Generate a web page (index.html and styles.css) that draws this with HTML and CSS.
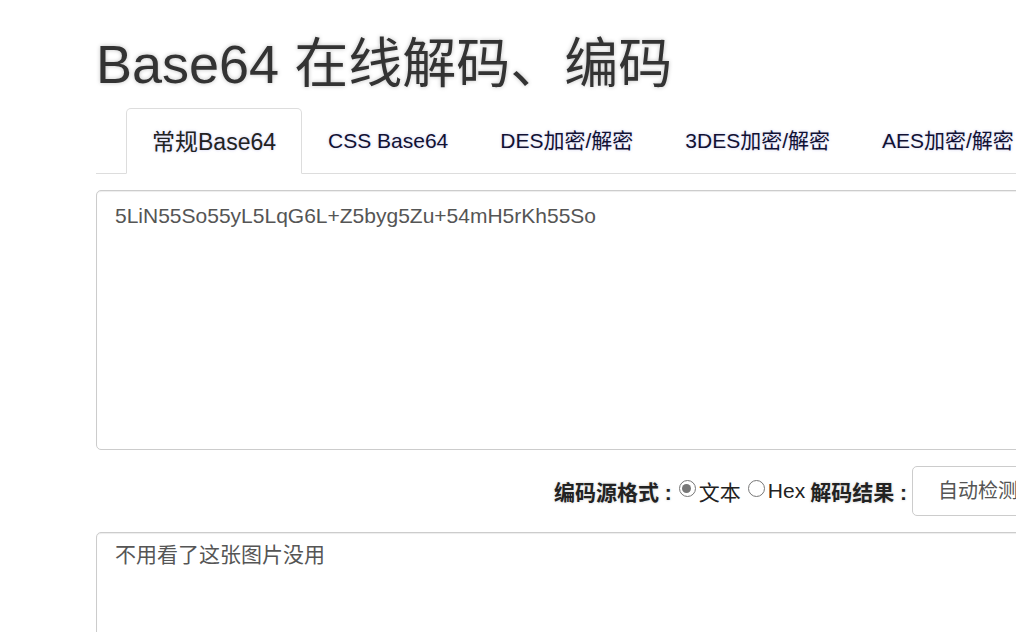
FILE: index.html
```html
<!DOCTYPE html>
<html lang="zh-CN">
<head>
    <meta charset="UTF-8">
    <title>Base64 在线解码、编码</title>
    <link rel="stylesheet" href="styles.css">
</head>
<body>
    <div class="container">
        <h1 class="page-title">Base64 在线解码、编码</h1>

        <ul class="nav-tabs">
            <li class="active"><a href="#">常规Base64</a></li>
            <li><a href="#">CSS Base64</a></li>
            <li><a href="#">DES加密/解密</a></li>
            <li><a href="#">3DES加密/解密</a></li>
            <li><a href="#">AES加密/解密</a></li>
        </ul>

        <textarea class="form-control source">5LiN55So55yL5LqG6L+Z5byg5Zu+54mH5rKh55So</textarea>

        <div class="options">
            <b>编码源格式 :</b>
            <label class="radio"><span class="dot checked"></span>文本</label>
            <label class="radio"><span class="dot"></span>Hex</label>
            <b class="result-label">解码结果 :</b>
            <div class="select">自动检测</div>
        </div>

        <textarea class="form-control result">不用看了这张图片没用</textarea>
    </div>
</body>
</html>
```

FILE: styles.css
```css
body {
    margin: 0;
    padding: 0;
    overflow: hidden; /* page is wider than the window */
    background: #fff;
    font-family: "Liberation Sans", "Noto Sans CJK SC", sans-serif;
    color: #333;
}

.container {
    width: 966px;
    margin-left: 96px;
    padding-top: 30px;
}

.page-title {
    margin: 0 0 11px 0;
    font-size: 54px;
    font-weight: normal;
    line-height: 68px;
    color: #333;
    text-shadow: 0 0 4px rgba(0, 0, 0, 0.25);
}

.nav-tabs {
    display: flex;
    list-style: none;
    margin: 0;
    padding: 0 0 0 30px;
    border-bottom: 1px solid #ddd;
}

.nav-tabs li {
    margin-bottom: -1px;
}

.nav-tabs a {
    display: block;
    height: 64px;
    line-height: 62px;
    padding: 0 25px;
    font-size: 21px;
    color: #111133;
    text-decoration: none;
    text-shadow: 0 0 3px rgba(60, 60, 200, 0.25);
    border: 1px solid transparent;
    border-radius: 5px 5px 0 0;
    box-sizing: border-box;
}

.nav-tabs .active a {
    height: 66px;
    line-height: 66px;
    padding: 0 25px;
    font-size: 23px;
    color: #222;
    background: #fff;
    border-color: #ddd #ddd transparent;
    margin-top: -1px;
}

.form-control {
    display: block;
    width: 100%;
    box-sizing: border-box;
    margin: 0;
    padding: 11px 18px;
    font-family: "Liberation Sans", "Noto Sans CJK SC", sans-serif;
    font-size: 21px;
    line-height: 27px;
    color: #555;
    border: 1px solid #ccc;
    border-radius: 5px;
    resize: none;
    outline: none;
    box-shadow: inset 0 1px 1px rgba(0, 0, 0, 0.075);
}

.source {
    margin-top: 16px;
    height: 260px;
}

.options {
    display: flex;
    justify-content: flex-end;
    align-items: center;
    padding: 16px 0;
    font-size: 21px;
    color: #222;
}

.options b {
    text-shadow: 0 0 3px rgba(0, 0, 0, 0.2);
    margin-right: 7px;
}

.radio {
    display: flex;
    align-items: center;
    margin-right: 7px;
}

.dot {
    flex-shrink: 0;
    width: 17px;
    height: 17px;
    margin: -5px 3px 0 0;
    border: 1.5px solid #777;
    border-radius: 50%;
    box-sizing: border-box;
    background: #fff;
    position: relative;
}

.dot.checked::after {
    content: "";
    position: absolute;
    left: 2.5px;
    top: 2.5px;
    width: 9px;
    height: 9px;
    border-radius: 50%;
    background: #777;
}

.options .result-label {
    margin-right: 5px;
}

.radio + .result-label {
    margin-left: -2px;
}

.select {
    width: 150px;
    height: 50px;
    box-sizing: border-box;
    padding-left: 25px;
    line-height: 48px;
    font-size: 20px;
    color: #555;
    border: 1px solid #ccc;
    border-radius: 5px;
}

.result {
    height: 200px;
    padding-top: 8px;
}
```
